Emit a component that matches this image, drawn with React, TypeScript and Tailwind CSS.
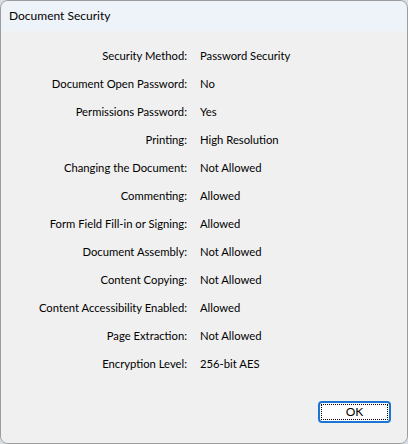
const ROWS: [string, string][] = [
  ['Security Method:', 'Password Security'],
  ['Document Open Password:', 'No'],
  ['Permissions Password:', 'Yes'],
  ['Printing:', 'High Resolution'],
  ['Changing the Document:', 'Not Allowed'],
  ['Commenting:', 'Allowed'],
  ['Form Field Fill-in or Signing:', 'Allowed'],
  ['Document Assembly:', 'Not Allowed'],
  ['Content Copying:', 'Not Allowed'],
  ['Content Accessibility Enabled:', 'Allowed'],
  ['Page Extraction:', 'Not Allowed'],
  ['Encryption Level:', '256-bit AES'],
]

export default function App() {
  return (
    <div className="w-[408px] h-[444px] bg-[#d9dde3]">
      <div
        className="w-full h-full flex flex-col rounded-lg overflow-hidden border border-[#9c9c9c] text-[11.25px] text-black"
        style={{ fontFamily: 'Lato, "Noto Sans", sans-serif' }}
      >
        {/* Title bar */}
        <div className="h-[30px] shrink-0 bg-[#eef2f9] flex items-center pl-[8px] text-[12px] text-black">
          Document Security
        </div>

        {/* Body */}
        <div className="flex-1 bg-[#f0f0f0] flex flex-col pt-[11px]">
          <div className="grid grid-cols-[186px_1fr] gap-x-[13px]">
            {ROWS.map(([label, value]) => (
              <div key={label} className="contents">
                <div className="h-[28px] flex items-center justify-end whitespace-nowrap">{label}</div>
                <div className="h-[28px] flex items-center whitespace-nowrap">{value}</div>
              </div>
            ))}
          </div>

          <div className="flex-1" />

          <div className="flex justify-end pr-[16px] pb-[20px]">
            <button className="relative w-[73px] h-[22px] bg-white border-2 border-[#1c74d4] rounded-[4px] flex items-center justify-center text-[12px] text-black">
              <span className="absolute inset-[1px] border border-dotted border-black rounded-[1px]" />
              OK
            </button>
          </div>
        </div>
      </div>
    </div>
  )
}
